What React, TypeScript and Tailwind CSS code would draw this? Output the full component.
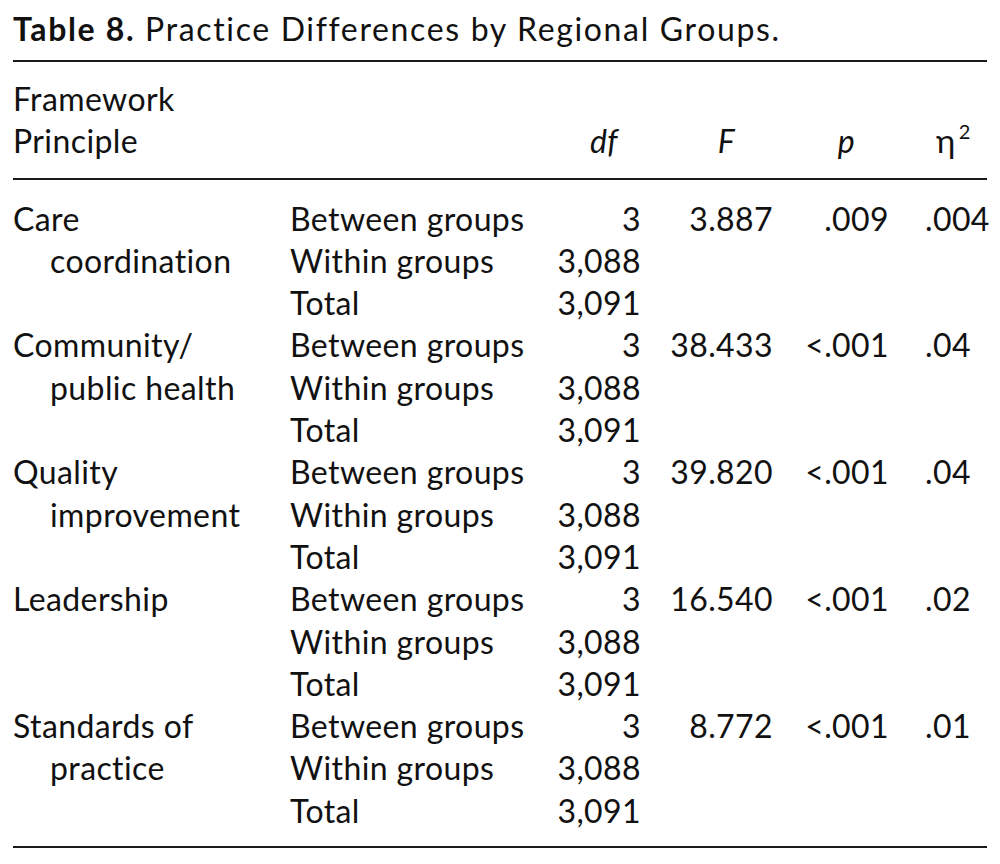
import React from 'react';

type Group = {
  label: string[];
  df: string;
  F: string;
  p: string;
  eta: string;
};

const groups: Group[] = [
  { label: ['Care', 'coordination'], df: '3', F: '3.887', p: '.009', eta: '.004' },
  { label: ['Community/', 'public health'], df: '3', F: '38.433', p: '<.001', eta: '.04' },
  { label: ['Quality', 'improvement'], df: '3', F: '39.820', p: '<.001', eta: '.04' },
  { label: ['Leadership'], df: '3', F: '16.540', p: '<.001', eta: '.02' },
  { label: ['Standards of', 'practice'], df: '3', F: '8.772', p: '<.001', eta: '.01' },
];

const cols = 'grid grid-cols-[277px_250px_101px_132px_116px_98px]';

export default function App() {
  return (
    <div
      className="w-[1000px] h-[864px] bg-white text-[#111] px-[13px] pt-[8px]"
      style={{ fontFamily: 'Lato, "Open Sans", sans-serif' }}
    >
      <h1 className="text-[32px] leading-[42px] tracking-[1.65px]">
        <span className="font-bold">Table 8.</span> Practice Differences by Regional Groups.
      </h1>
      <div className="mt-[10px] h-[2px] bg-[#1a1a1a]" />

      <div className={`${cols} pt-[16px] pb-[15px] text-[32px] leading-[42.3px] tracking-[0.4px]`}>
        <div>
          <div>Framework</div>
          <div>Principle</div>
        </div>
        <div />
        <div className="self-end text-right pr-[23px] italic">df</div>
        <div className="self-end text-right pr-[38px] italic">F</div>
        <div className="self-end text-right pr-[34px] italic">p</div>
        <div className="self-end pl-[47px]">
          <span className="text-[33px]">η</span>
          <sup className="text-[20px] relative -top-[14px] ml-[3px]">2</sup>
        </div>
      </div>
      <div className="h-[2px] bg-[#1a1a1a]" />

      <div className="pt-[18px] pb-[14px] text-[32px] leading-[42.3px] tracking-[0.4px]">
        {groups.map((g) => (
          <div key={g.label.join(' ')} className={cols}>
            <div>
              <div>{g.label[0]}</div>
              {g.label[1] && <div className="pl-[37px]">{g.label[1]}</div>}
            </div>
            <div>
              <div>Between groups</div>
              <div>Within groups</div>
              <div>Total</div>
            </div>
            <div className="text-right">
              <div>{g.df}</div>
              <div>3,088</div>
              <div>3,091</div>
            </div>
            <div className="text-right">{g.F}</div>
            <div className="text-right">{g.p}</div>
            <div className="pl-[36px]">{g.eta}</div>
          </div>
        ))}
      </div>
      <div className="h-[2px] bg-[#1a1a1a]" />
    </div>
  );
}
